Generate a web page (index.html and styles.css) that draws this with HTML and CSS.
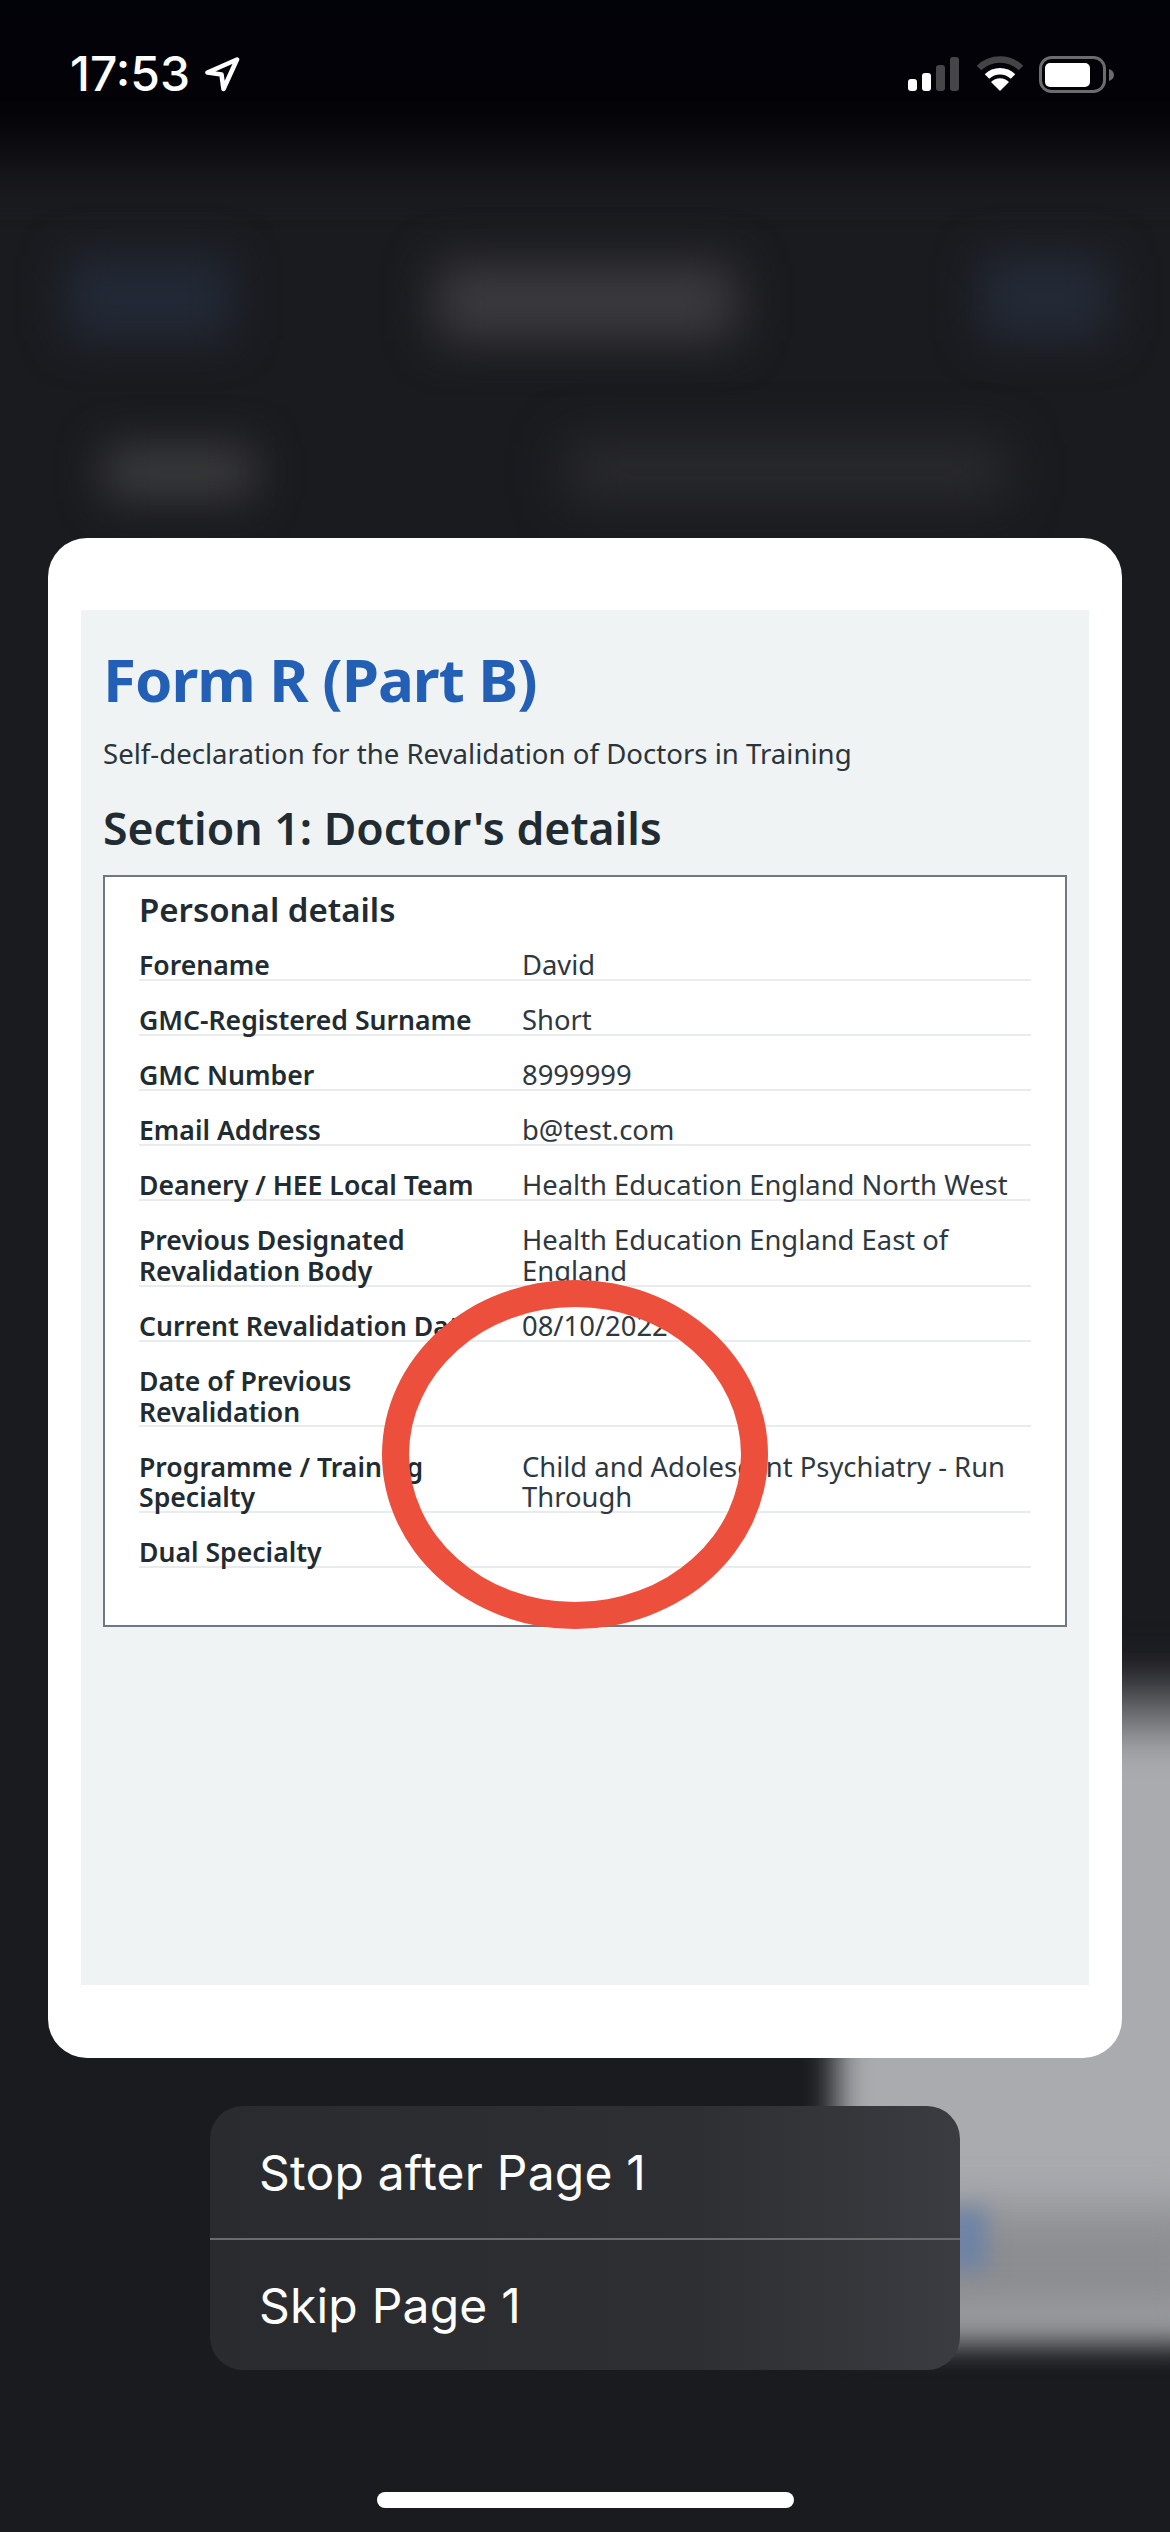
FILE: index.html
```html
<!DOCTYPE html>
<html lang="en">
<head>
<meta charset="utf-8">
<title>Form R preview</title>
<link rel="stylesheet" href="styles.css">
</head>
<body>
<div class="screen">
  <div class="backdrop">
    <div class="blob blob-top"></div>
    <div class="blob blob-blue-left"></div>
    <div class="blob blob-center"></div>
    <div class="blob blob-blue-right"></div>
    <div class="blob blob-low-left"></div>
    <div class="blob blob-low-right"></div>
    <div class="blob blob-light"></div>
    <div class="blob blob-band"></div>
    <div class="blob blob-link"></div>
  </div>

  <header class="status">
    <div class="status-left">
      <span class="time">17:53</span>
      <svg class="loc" width="36" height="36" viewBox="0 0 36 36"><path d="M33 3.5 3.5 16.5 17.5 18.5 19.5 33Z" fill="none" stroke="#fff" stroke-width="4.6" stroke-linejoin="round"/></svg>
    </div>
    <div class="status-right">
      <svg width="52" height="36" viewBox="0 0 52 36" class="signal">
        <rect x="0" y="22" width="9" height="12" rx="3" fill="#fff"/>
        <rect x="14" y="16" width="9" height="18" rx="3" fill="#fff"/>
        <rect x="28" y="8" width="9" height="26" rx="3" fill="#464648"/>
        <rect x="42" y="0" width="9" height="34" rx="3" fill="#464648"/>
      </svg>
      <svg width="48" height="36" viewBox="0 0 48 36" class="wifi">
        <path d="M3 12A30 30 0 0 1 45 12" fill="none" stroke="#444446" stroke-width="6.5"/>
        <path d="M11 20.5A18.500 18.500 0 0 1 37 20.500" fill="none" stroke="#fff" stroke-width="6.500"/>
        <path d="M24 35 15 26A12.500 12.500 0 0 1 33 26Z" fill="#fff"/>
      </svg>
      <svg width="76" height="38" viewBox="0 0 76 38" class="battery">
        <rect x="1.500" y="1.500" width="64" height="34" rx="11" fill="none" stroke="#6c6c6f" stroke-width="3"/>
        <rect x="6" y="7" width="45" height="24" rx="5" fill="#fff"/>
        <path d="M70 13C73 14 75 16 75 19S73 24 70 25Z" fill="#6c6c6f"/>
      </svg>
    </div>
  </header>

  <main class="card">
    <div class="page">
      <h1 class="title">Form R (Part B)</h1>
      <p class="subtitle">Self-declaration for the Revalidation of Doctors in Training</p>
      <h2 class="section">Section 1: Doctor's details</h2>
      <section class="box">
        <h3 class="box-title">Personal details</h3>
        <div class="row"><div class="label">Forename</div><div class="value">David</div></div>
        <div class="row"><div class="label">GMC-Registered Surname</div><div class="value">Short</div></div>
        <div class="row"><div class="label">GMC Number</div><div class="value">8999999</div></div>
        <div class="row"><div class="label">Email Address</div><div class="value">b@test.com</div></div>
        <div class="row"><div class="label">Deanery / HEE Local Team</div><div class="value">Health Education England North West</div></div>
        <div class="row"><div class="label">Previous Designated Revalidation Body</div><div class="value">Health Education England East of England</div></div>
        <div class="row"><div class="label">Current Revalidation Date</div><div class="value">08/10/2022</div></div>
        <div class="row"><div class="label">Date of Previous Revalidation</div><div class="value"></div></div>
        <div class="row"><div class="label">Programme / Training Specialty</div><div class="value">Child and Adolescent Psychiatry - Run Through</div></div>
        <div class="row"><div class="label">Dual Specialty</div><div class="value"></div></div>
        <div class="ring"></div>
      </section>
    </div>
  </main>

  <nav class="menu">
    <div class="menu-item">Stop after Page 1</div>
    <div class="menu-item">Skip Page 1</div>
  </nav>

  <div class="home"></div>
</div>
</body>
</html>
```

FILE: styles.css
```css
* { box-sizing: border-box; }
html, body { margin: 0; padding: 0; }
body { background: #18191d; }

.screen {
  position: relative;
  width: 1170px;
  height: 2532px;
  overflow: hidden;
  background: #1a1b1f;
  font-family: "Noto Sans", sans-serif;
}

/* blurred page behind the preview */
.backdrop { position: absolute; inset: 0; overflow: hidden; }
.blob { position: absolute; }
.blob-top {
  left: -60px; right: -60px; top: -60px; height: 250px;
  background: linear-gradient(#02020a 0, #020207 70%, #1a1b1f 100%);
  filter: blur(16px);
}
.blob-blue-left { left: 66px; top: 256px; width: 166px; height: 84px; background: #222936; filter: blur(22px); }
.blob-center { left: 436px; top: 264px; width: 300px; height: 76px; background: #3b3b3f; filter: blur(24px); }
.blob-blue-right { left: 980px; top: 256px; width: 130px; height: 84px; background: #232a36; filter: blur(22px); }
.blob-low-left { left: 104px; top: 446px; width: 150px; height: 52px; background: #3a3b3d; filter: blur(22px); }
.blob-low-right { left: 566px; top: 444px; width: 440px; height: 54px; background: #2b2c2f; filter: blur(26px); }
.blob-light {
  left: 836px; top: 1660px; width: 400px; height: 680px;
  background: linear-gradient(#1a1b1f 0, #a9abaf 14%);
  filter: blur(16px);
}
.blob-band { left: 850px; top: 2208px; width: 360px; height: 112px; background: #8c8d90; filter: blur(24px); }
.blob-link { left: 946px; top: 2208px; width: 40px; height: 62px; background: #6d82a6; filter: blur(11px); }

/* status bar */
.status {
  position: relative;
  height: 538px;
  padding: 56px 55px 0 70px;
  display: flex;
  justify-content: space-between;
  align-items: flex-start;
  color: #fff;
}
.status-left { display: flex; align-items: center; gap: 14px; }
.time { font-family: Inter, sans-serif; font-size: 48px; font-weight: 500; line-height: 36px; }
.status-right { display: flex; align-items: flex-start; gap: 16px; }
.signal { margin-top: 1px; }
.wifi { margin-right: -1px; }

/* preview card */
.card {
  position: relative;
  margin: 0 48px;
  height: 1520px;
  padding: 72px 33px 73px;
  background: #fff;
  border-radius: 39px;
}
.page {
  height: 100%;
  padding: 33px 22px 0;
  background: #eff3f4;
  color: #212b32;
}
.title {
  margin: 0;
  font-size: 60px;
  line-height: 72px;
  font-weight: 700;
  letter-spacing: -1px;
  color: #2360b5;
}
.subtitle {
  margin: 21px 0 0;
  font-size: 27.6px;
  line-height: 34px;
  font-weight: 400;
  color: #2b343b;
}
.section {
  margin: 29.5px 0 0;
  font-size: 44.6px;
  line-height: 56px;
  font-weight: 600;
}
.box {
  position: relative;
  margin-top: 19px;
  height: 752px;
  padding: 18px 34px 0;
  background: #fff;
  border: 2px solid #70787f;
}
.box-title {
  margin: 0 0 1px;
  font-size: 33px;
  line-height: 30.5px;
  font-weight: 600;
}
.row {
  display: grid;
  grid-template-columns: 383px 1fr;
  padding-top: 24.3px;
  border-bottom: 2px solid #e8ecef;
  font-size: 26.6px;
  line-height: 30.7px;
}
.label { font-weight: 600; padding-right: 30px; margin-bottom: -2px; }
.value { font-weight: 400; font-size: 27.4px; color: #2f383f; margin-bottom: -2px; }
.ring {
  position: absolute;
  left: 277px; top: 403px;
  width: 386px; height: 349px;
  border: 27px solid #ec4f3c;
  border-radius: 50%;
}

/* context menu */
.menu {
  position: relative;
  width: 750px;
  margin: 48px 0 0 210px;
  border-radius: 33px;
  overflow: hidden;
  background: linear-gradient(90deg, #2a2b2f 0, #2e2f32 65%, #3b3c41 100%);
  font-family: Inter, sans-serif;
  font-size: 48px;
  font-weight: 400;
  letter-spacing: 0.2px;
  color: #fff;
}
.menu-item { height: 132px; padding-left: 49px; display: flex; align-items: center; }
.menu-item + .menu-item { border-top: 2px solid #6a6b6e; }

.home {
  position: relative;
  width: 417px;
  height: 16px;
  margin: 122px 0 0 377px;
  background: #fff;
  border-radius: 8px;
}
```
